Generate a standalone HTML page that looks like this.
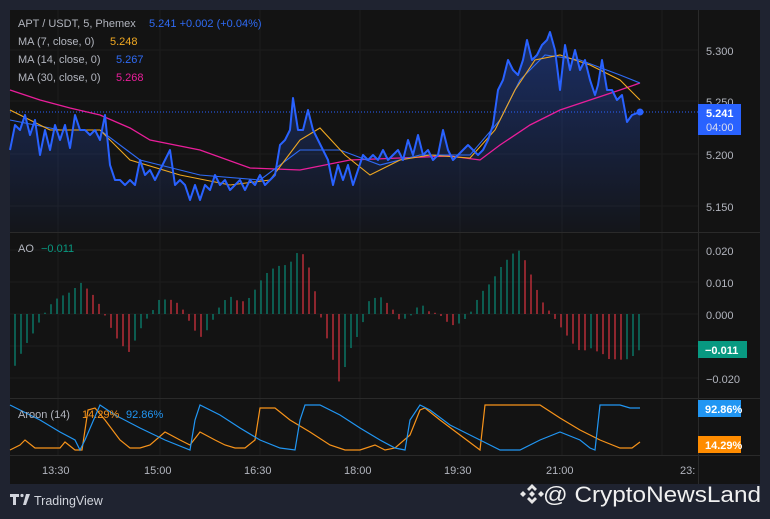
<!DOCTYPE html>
<html><head><meta charset="utf-8"><style>
body{margin:0;width:770px;height:519px;background:#1f2330;overflow:hidden;font-family:"Liberation Sans",sans-serif}
svg{position:absolute;left:0;top:0}
text{font-family:"Liberation Sans",sans-serif}
</style></head><body>
<svg width="770" height="519" xmlns="http://www.w3.org/2000/svg">
<defs><linearGradient id="g" x1="0" y1="0" x2="0" y2="1"><stop offset="0" stop-color="#2962ff" stop-opacity="0.35"/><stop offset="1" stop-color="#2962ff" stop-opacity="0.03"/></linearGradient></defs>
<rect x="10" y="10" width="750" height="474" fill="#131313"/>
<g stroke="#1c1c1c" stroke-width="1">
<line x1="10" y1="50" x2="698" y2="50"/><line x1="10" y1="101" x2="698" y2="101"/><line x1="10" y1="154" x2="698" y2="154"/><line x1="10" y1="206" x2="698" y2="206"/>
<line x1="10" y1="250" x2="698" y2="250"/><line x1="10" y1="282" x2="698" y2="282"/><line x1="10" y1="314" x2="698" y2="314"/><line x1="10" y1="346" x2="698" y2="346"/><line x1="10" y1="378" x2="698" y2="378"/>
<line x1="58" y1="10" x2="58" y2="455"/><line x1="160" y1="10" x2="160" y2="455"/><line x1="260" y1="10" x2="260" y2="455"/><line x1="360" y1="10" x2="360" y2="455"/><line x1="460" y1="10" x2="460" y2="455"/><line x1="562" y1="10" x2="562" y2="455"/><line x1="662" y1="10" x2="662" y2="455"/>
</g>
<g stroke="#2a2a2a" stroke-width="1">
<line x1="10" y1="232.5" x2="760" y2="232.5"/><line x1="10" y1="398.5" x2="760" y2="398.5"/><line x1="10" y1="455.5" x2="760" y2="455.5"/><line x1="698.5" y1="10" x2="698.5" y2="484"/>
</g>
<polygon fill="url(#g)" points="10,232 10,150 15,125 20,130 25,115 30,135 35,120 40,155 45,130 50,150 55,125 60,140 65,125 70,148 75,115 80,130 85,130 90,135 95,130 100,140 105,115 110,165 115,180 120,180 125,185 130,180 135,185 140,160 145,175 150,170 155,180 160,170 165,160 170,150 175,185 180,180 185,185 190,200 195,185 200,200 205,185 210,190 215,175 220,185 225,180 230,190 235,185 240,180 245,190 250,180 255,185 260,175 265,185 270,180 275,175 280,145 285,140 290,130 293,98 298,130 303,130 308,110 313,130 318,140 323,150 328,160 333,185 338,165 343,180 348,165 353,185 358,170 363,155 368,160 373,155 378,160 383,150 388,160 393,155 398,150 403,160 408,140 413,155 418,135 423,155 428,150 433,160 438,155 443,130 448,150 453,160 458,155 463,150 468,145 473,150 478,155 483,150 488,140 493,125 498,90 503,80 508,60 513,70 518,75 523,60 527,40 532,60 537,55 542,45 547,40 550,32 555,50 560,90 565,45 570,70 575,50 580,70 585,60 590,80 595,95 598,85 602,60 607,90 612,90 617,100 622,95 627,122 632,115 640,112 640,232"/>
<line x1="10" y1="112" x2="698" y2="112" stroke="#2962ff" stroke-dasharray="1,2"/>
<polyline fill="none" stroke="#e91e9a" stroke-width="1.3" points="10,90 40,100 70,108 100,115 130,128 150,140 200,150 250,168 300,170 350,160 400,158 450,156 480,160 500,145 530,125 560,110 590,100 620,90 640,83"/>
<polyline fill="none" stroke="#2f6bf5" stroke-width="1.1" points="10,120 60,130 100,130 140,160 200,175 260,180 300,150 340,150 380,165 420,155 470,155 500,120 520,80 545,55 580,60 620,75 640,83"/>
<polyline fill="none" stroke="#f0a821" stroke-width="1.1" points="10,110 50,130 100,130 130,160 180,175 230,185 270,180 300,140 320,128 345,155 370,175 400,160 430,155 470,158 495,130 515,90 535,60 560,55 590,65 620,80 640,100"/>
<polyline fill="none" stroke="#2962ff" stroke-width="2" stroke-linejoin="round" points="10,150 15,125 20,130 25,115 30,135 35,120 40,155 45,130 50,150 55,125 60,140 65,125 70,148 75,115 80,130 85,130 90,135 95,130 100,140 105,115 110,165 115,180 120,180 125,185 130,180 135,185 140,160 145,175 150,170 155,180 160,170 165,160 170,150 175,185 180,180 185,185 190,200 195,185 200,200 205,185 210,190 215,175 220,185 225,180 230,190 235,185 240,180 245,190 250,180 255,185 260,175 265,185 270,180 275,175 280,145 285,140 290,130 293,98 298,130 303,130 308,110 313,130 318,140 323,150 328,160 333,185 338,165 343,180 348,165 353,185 358,170 363,155 368,160 373,155 378,160 383,150 388,160 393,155 398,150 403,160 408,140 413,155 418,135 423,155 428,150 433,160 438,155 443,130 448,150 453,160 458,155 463,150 468,145 473,150 478,155 483,150 488,140 493,125 498,90 503,80 508,60 513,70 518,75 523,60 527,40 532,60 537,55 542,45 547,40 550,32 555,50 560,90 565,45 570,70 575,50 580,70 585,60 590,80 595,95 598,85 602,60 607,90 612,90 617,100 622,95 627,122 632,115 640,112"/>
<circle cx="640" cy="112" r="3.5" fill="#2962ff"/>
<g id="ao"></g>
<polyline fill="none" stroke="#f7931a" stroke-width="1.2" points="10,450 20,445 25,440 35,448 60,448 65,442 75,450 82,450 88,410 95,408 105,420 120,440 130,448 140,448 150,445 165,432 180,440 190,445 200,432 215,440 225,445 235,448 245,448 255,440 260,408 275,408 290,420 310,432 330,445 345,450 360,450 375,445 385,450 395,448 410,435 420,410 425,408 440,420 460,435 480,450 485,405 500,405 540,405 560,418 580,430 600,440 620,448 632,448 640,442"/>
<polyline fill="none" stroke="#2196f3" stroke-width="1.2" points="10,405 40,420 60,432 75,440 80,450 85,440 100,405 115,415 140,428 165,440 190,450 195,420 200,405 220,415 240,428 260,440 280,448 295,450 300,420 305,405 320,405 340,415 360,428 380,440 395,448 405,450 410,420 420,405 430,410 450,425 470,435 480,440 490,445 500,450 520,450 540,440 560,432 580,440 590,448 595,450 600,405 610,405 620,405 630,408 640,408"/>
<g font-size="11" fill="#b2b5be">
<text x="18" y="27">APT / USDT, 5, Phemex</text><text x="149" y="27" fill="#2f6bf5">5.241  +0.002 (+0.04%)</text>
<text x="18" y="45">MA (7, close, 0)</text><text x="110" y="45" fill="#f0a821">5.248</text>
<text x="18" y="63">MA (14, close, 0)</text><text x="116" y="63" fill="#2f6bf5">5.267</text>
<text x="18" y="81">MA (30, close, 0)</text><text x="116" y="81" fill="#e91e9a">5.268</text>
<text x="18" y="252">AO</text><text x="41" y="252" fill="#089981">−0.011</text>
<text x="18" y="418">Aroon (14)</text><text x="82" y="418" fill="#f7931a">14.29%</text><text x="126" y="418" fill="#2196f3">92.86%</text>
<text x="706" y="55">5.300</text><text x="706" y="106">5.250</text><text x="706" y="159">5.200</text><text x="706" y="211">5.150</text>
<text x="706" y="255">0.020</text><text x="706" y="287">0.010</text><text x="706" y="319">0.000</text><text x="706" y="383">−0.020</text>
<text x="42" y="474">13:30</text><text x="144" y="474">15:00</text><text x="244" y="474">16:30</text><text x="344" y="474">18:00</text><text x="444" y="474">19:30</text><text x="546" y="474">21:00</text><text x="680" y="474">23:</text>
</g>
<rect x="698" y="104" width="43" height="31" fill="#2962ff"/>
<text x="706" y="117" font-size="11" font-weight="bold" fill="#fff">5.241</text><text x="706" y="131" font-size="11" fill="#dde">04:00</text>
<rect x="698" y="341" width="49" height="17" fill="#089981"/><text x="705" y="354" font-size="11" font-weight="bold" fill="#fff">−0.011</text>
<rect x="698" y="400" width="43" height="17" fill="#2196f3"/><text x="705" y="413" font-size="11" font-weight="bold" fill="#fff">92.86%</text>
<rect x="698" y="436" width="43" height="17" fill="#ff8c00"/><text x="705" y="449" font-size="11" font-weight="bold" fill="#fff">14.29%</text>
<g fill="#d1d4dc"><path d="M10 494h9v3h-3v8h-3v-8h-3z"/><circle cx="22" cy="495.5" r="1.6"/><path d="M26 494h4l-4 11h-3z"/></g>
<text x="34" y="505" font-size="12.5" fill="#d1d4dc">TradingView</text>
<g fill="#e6e6e6" transform="translate(522,494)"><path d="M-2 0l3-3 3 3-3 3z"/><path d="M10-10l5 5-2 2-3-3-3 3-2-2z"/><path d="M10 10l5-5-2-2-3 3-3-3-2 2z"/><path d="M10-3l3 3-3 3-3-3z"/><path d="M22 0l-3 3-3-3 3-3z"/></g>
<text x="543" y="502" font-size="22" fill="#f0f0f0" textLength="218" lengthAdjust="spacingAndGlyphs">@ CryptoNewsLand</text>
</svg>
<script>
var k=[[15,-55],[25,-30],[30,-20],[40,-5],[50,5],[60,15],[70,25],[80,35],[90,20],[100,5],[110,-10],[120,-25],[130,-40],[140,-20],[150,0],[160,20],[170,15],[180,5],[190,-10],[200,-20],[210,-10],[220,5],[230,15],[240,15],[250,20],[260,30],[270,40],[280,50],[290,55],[300,65],[310,40],[320,0],[330,-30],[340,-70],[350,-40],[360,-20],[370,20],[380,20],[390,5],[400,-10],[410,0],[420,15],[430,0],[440,-5],[450,-10],[460,-5],[470,0],[480,15],[490,30],[500,50],[510,60],[520,60],[530,40],[540,20],[550,5],[560,-15],[570,-30],[580,-35],[590,-30],[600,-40],[610,-50],[620,-45],[630,-40],[640,-35]];
function f(x){for(var i=0;i<k.length-1;i++){if(x<=k[i+1][0]){var t=(x-k[i][0])/(k[i+1][0]-k[i][0]);return k[i][1]+t*(k[i+1][1]-k[i][1]);}}return k[k.length-1][1];}
var s='',p=null;for(var x=15;x<=639;x+=6){var v=f(x)+Math.sin(x*0.9)*4;var c=(p===null||v>=p)?'#089981':'#f23645';var y1=314,y2=314-v;s+='<line x1="'+x+'" x2="'+x+'" y1="'+Math.min(y1,y2)+'" y2="'+Math.max(y1,y2)+'" stroke="'+c+'" stroke-width="1.1"/>';p=v;}
document.getElementById('ao').innerHTML=s;
</script>
</body></html>
